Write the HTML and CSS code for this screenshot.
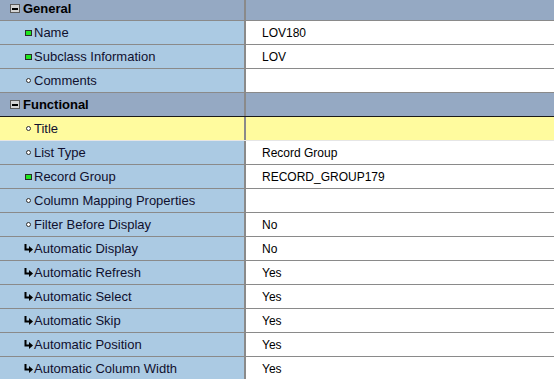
FILE: index.html
```html
<!DOCTYPE html>
<html>
<head>
<meta charset="utf-8">
<link rel="stylesheet" href="styles.css">
</head>
<body>
<div class="sheet">
  <div class="row group">
    <div class="label"><span class="minus"></span><span class="gname">General</span></div>
    <div class="value"></div>
  </div>
  <div class="row">
    <div class="label"><span class="ico"><span class="sq"></span></span>Name</div>
    <div class="value">LOV180</div>
  </div>
  <div class="row">
    <div class="label"><span class="ico"><span class="sq"></span></span>Subclass Information</div>
    <div class="value">LOV</div>
  </div>
  <div class="row">
    <div class="label"><span class="ico"><span class="dot"></span></span>Comments</div>
    <div class="value"></div>
  </div>
  <div class="row group">
    <div class="label"><span class="minus"></span><span class="gname">Functional</span></div>
    <div class="value"></div>
  </div>
  <div class="row sel">
    <div class="label"><span class="ico"><span class="dot"></span></span>Title</div>
    <div class="value"></div>
  </div>
  <div class="row">
    <div class="label"><span class="ico"><span class="dot"></span></span>List Type</div>
    <div class="value">Record Group</div>
  </div>
  <div class="row">
    <div class="label"><span class="ico"><span class="sq"></span></span>Record Group</div>
    <div class="value">RECORD_GROUP179</div>
  </div>
  <div class="row">
    <div class="label"><span class="ico"><span class="dot"></span></span>Column Mapping Properties</div>
    <div class="value"></div>
  </div>
  <div class="row">
    <div class="label"><span class="ico"><span class="dot"></span></span>Filter Before Display</div>
    <div class="value">No</div>
  </div>
  <div class="row">
    <div class="label"><span class="ico"><svg class="arr" width="9" height="9" viewBox="0 0 9 9"><path d="M1.5 0V5.5H6" fill="none" stroke="#000" stroke-width="2"/><path d="M5 2L9 5.5L5 9Z" fill="#000"/></svg></span>Automatic Display</div>
    <div class="value">No</div>
  </div>
  <div class="row">
    <div class="label"><span class="ico"><svg class="arr" width="9" height="9" viewBox="0 0 9 9"><path d="M1.5 0V5.5H6" fill="none" stroke="#000" stroke-width="2"/><path d="M5 2L9 5.5L5 9Z" fill="#000"/></svg></span>Automatic Refresh</div>
    <div class="value">Yes</div>
  </div>
  <div class="row">
    <div class="label"><span class="ico"><svg class="arr" width="9" height="9" viewBox="0 0 9 9"><path d="M1.5 0V5.5H6" fill="none" stroke="#000" stroke-width="2"/><path d="M5 2L9 5.5L5 9Z" fill="#000"/></svg></span>Automatic Select</div>
    <div class="value">Yes</div>
  </div>
  <div class="row">
    <div class="label"><span class="ico"><svg class="arr" width="9" height="9" viewBox="0 0 9 9"><path d="M1.5 0V5.5H6" fill="none" stroke="#000" stroke-width="2"/><path d="M5 2L9 5.5L5 9Z" fill="#000"/></svg></span>Automatic Skip</div>
    <div class="value">Yes</div>
  </div>
  <div class="row">
    <div class="label"><span class="ico"><svg class="arr" width="9" height="9" viewBox="0 0 9 9"><path d="M1.5 0V5.5H6" fill="none" stroke="#000" stroke-width="2"/><path d="M5 2L9 5.5L5 9Z" fill="#000"/></svg></span>Automatic Position</div>
    <div class="value">Yes</div>
  </div>
  <div class="row">
    <div class="label"><span class="ico"><svg class="arr" width="9" height="9" viewBox="0 0 9 9"><path d="M1.5 0V5.5H6" fill="none" stroke="#000" stroke-width="2"/><path d="M5 2L9 5.5L5 9Z" fill="#000"/></svg></span>Automatic Column Width</div>
    <div class="value">Yes</div>
  </div>
</div>
</body>
</html>
```
FILE: styles.css
```css
html, body {
  margin: 0;
  padding: 0;
  background: #ffffff;
  overflow: hidden;
}
.sheet {
  margin-top: -3px;
  font-family: "Liberation Sans", Arial, sans-serif;
  font-size: 13px;
}
.row {
  display: grid;
  grid-template-columns: 244px 1fr;
  height: 23px;
  border-bottom: 1px solid #8a8a8a;
}
.label {
  display: flex;
  align-items: center;
  background: #abcae3;
  color: #10102e;
  padding-left: 22px;
  white-space: nowrap;
  overflow: hidden;
}
.value {
  display: flex;
  align-items: center;
  background: #ffffff;
  color: #000000;
  border-left: 2px solid #8a8a8a;
  padding-left: 16px;
  font-size: 12px;
  white-space: nowrap;
}
.group .label,
.group .value {
  background: #95a9c3;
}
.group .label {
  padding-left: 10px;
}
.gname {
  font-weight: bold;
  color: #000000;
  margin-left: 3px;
}
.minus {
  width: 10px;
  height: 9px;
  box-sizing: border-box;
  border: 1px solid #5a5a5a;
  background: #d4d4d4;
  display: flex;
  align-items: center;
  justify-content: center;
}
.minus::before {
  content: "";
  width: 6px;
  height: 2px;
  background: #000000;
}
.ico {
  width: 12px;
  height: 12px;
  display: flex;
  align-items: center;
  justify-content: center;
}
.sq {
  width: 7px;
  height: 6px;
  box-sizing: border-box;
  border: 1px solid #2a2a2a;
  background: #1ee61e;
}
.dot {
  width: 5px;
  height: 5px;
  box-sizing: border-box;
  border: 1px solid #303030;
  border-radius: 50%;
  background: #ffffff;
}
.arr {
  display: block;
}
.sel .label,
.sel .value {
  background: #fffb9e;
}
.sel {
  box-shadow: 0 -1px 0 #1a1a1a;
  border-bottom-color: #e6e6e6;
}
```
